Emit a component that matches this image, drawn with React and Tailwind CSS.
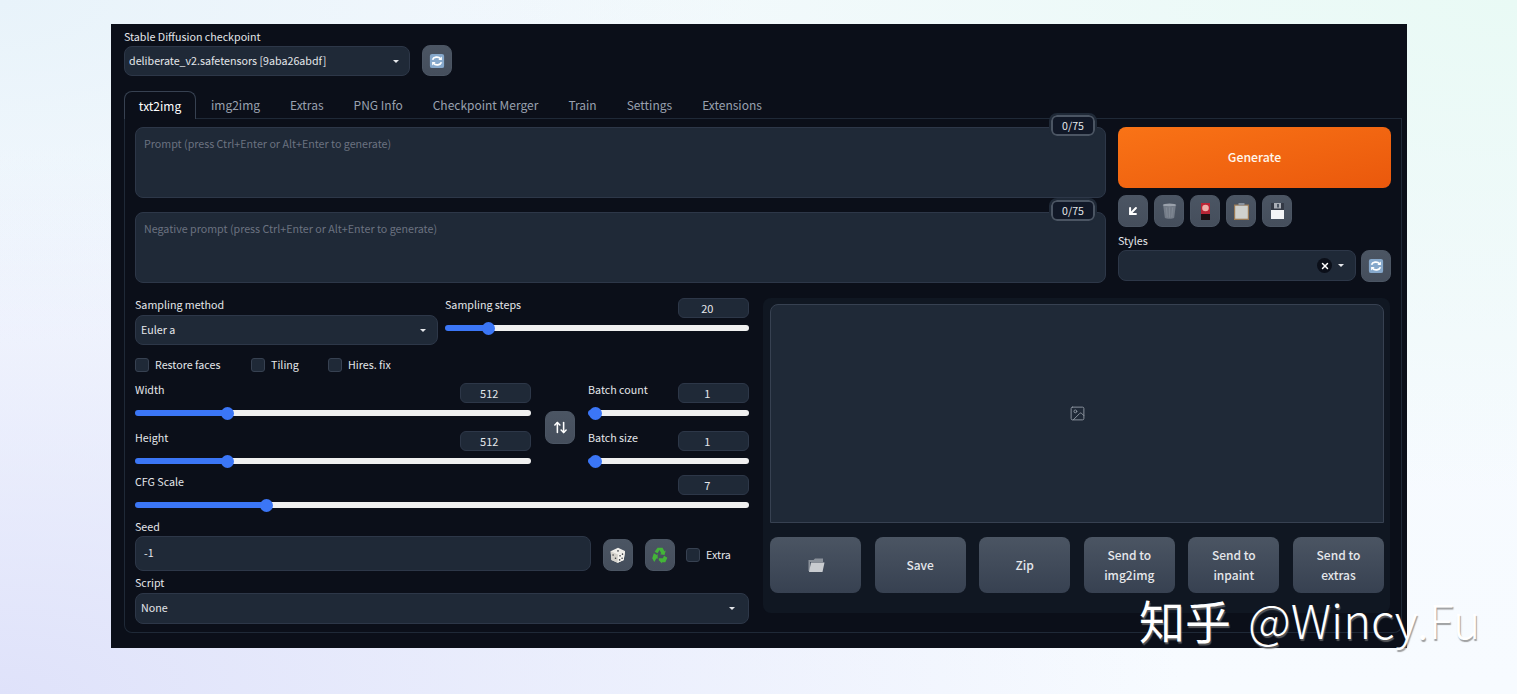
import React from "react";
import { ArrowDownLeft, ArrowUpDown, Image as ImageIcon, X } from "lucide-react";

const Caret = () => (
  <span className="w-0 h-0 border-x-[3px] border-x-transparent border-t-[3px] border-t-gray-200" />
);

const Label = ({ children, className = "" }) => (
  <div className={`text-[10.7px] leading-[16px] text-gray-200 ${className}`}>{children}</div>
);

const RefreshGlyph = () => (
  <svg width="16" height="16" viewBox="0 0 18 18">
    <rect x="1" y="1" width="16" height="16" rx="2.500" fill="#86a8cb" />
    <path d="M4 7.500C5 4.500 10.500 3.500 13 6.500" fill="none" stroke="#fff" strokeWidth="2" />
    <path d="M14.500 4v4h-4z" fill="#fff" />
    <path d="M14 10.500C13 13.500 7.500 14.500 5 11.500" fill="none" stroke="#fff" strokeWidth="2" />
    <path d="M3.500 14v-4h4z" fill="#fff" />
  </svg>
);

const TrashGlyph = () => (
  <svg width="17" height="18" viewBox="0 0 18 20">
    <ellipse cx="9" cy="3.500" rx="7.500" ry="1.800" fill="#9aa1ab" />
    <path d="M2 4l1.800 13.500c1.500 1.500 9 1.500 10.400 0L16 4c-3 1.500-11 1.500-14 0z" fill="#747c88" />
    <path d="M5.500 6l1 11M9 6v11.500M12.500 6l-1 11" stroke="#868e99" strokeWidth="0.800" />
  </svg>
);

const RedGlyph = () => (
  <svg width="9" height="17" viewBox="0 0 9 17">
    <rect x="0" y="0" width="9" height="11" fill="#b92535" />
    <rect x="0" y="11" width="9" height="6" fill="#1c1013" />
    <circle cx="4.500" cy="5" r="3.300" fill="#eeb0a9" />
  </svg>
);

const ClipboardGlyph = () => (
  <svg width="15" height="17" viewBox="0 0 15 17">
    <rect x="0" y="1.500" width="15" height="15.500" fill="#9a7a56" />
    <rect x="1.200" y="2.700" width="12.600" height="13" fill="#cfd0cd" />
    <rect x="4.500" y="0" width="6" height="2.500" fill="#8b929c" />
  </svg>
);

const SaveGlyph = () => (
  <svg width="13" height="16" viewBox="0 0 13 16">
    <rect x="0" y="0" width="13" height="7" fill="#333945" />
    <rect x="3" y="0" width="7" height="5.500" fill="#a9aeb6" />
    <rect x="6" y="1" width="2" height="3.500" fill="#4b5563" />
    <rect x="0" y="7" width="13" height="9" fill="#f3f4f6" />
  </svg>
);

const DiceGlyph = () => (
  <svg width="18" height="18" viewBox="0 0 22 22">
    <path d="M11 2l8.500 4-1.500 11-7.500 3.500L3 17 2 6.500z" fill="#f0eeea" />
    <path d="M2 6.500L11 10.500l8.500-4.500-1.500 11-7.500 3.500L3 17z" fill="#d4d1cb" />
    <path d="M11 10.500l8.500-4.500-1.500 11-7.500 3.500z" fill="#f5f3ef" />
    <g fill="#3a3d42">
      <circle cx="11" cy="6" r="1" />
      <circle cx="5" cy="11" r="1" />
      <circle cx="8" cy="15" r="1" />
      <circle cx="13.500" cy="12" r="1" />
      <circle cx="16.500" cy="10" r="1" />
      <circle cx="13" cy="17" r="1" />
      <circle cx="16" cy="15" r="1" />
    </g>
  </svg>
);

const RecycleGlyph = () => (
  <svg width="18" height="18" viewBox="0 0 22 22">
    <g fill="#43b538">
      <path d="M8 2h6l2.500 4.500 1.500-1-1.500 5.500-5.500-1 1.500-1L10.500 5 8 9 4.500 7z" />
      <path d="M3.500 9l3.500 2 1-1.200.3 5.500H6.500L4 19.500 1.500 15z" />
      <path d="M9.500 15h5l1.500-3 4 2.500-2.500 5.500h-4v1.500L9.500 17.500z" />
    </g>
  </svg>
);

const FolderGlyph = () => (
  <svg width="18" height="16" viewBox="0 0 18 16">
    <path d="M1.500 3h5l1.500-1.500h8V5H3v9H1.500z" fill="#8b929b" />
    <path d="M4 5.500h13.500L15.500 15H2z" fill="#c9ccd0" />
  </svg>
);

const IconButton = ({ children, className = "" }) => (
  <button className={`flex items-center justify-center w-[30px] rounded-lg bg-gradient-to-b from-[#4b5563] to-[#454e5c] border border-[#4b5563] ${className}`}>
    {children}
  </button>
);

const NumberBox = ({ value, className = "" }) => (
  <div className={`w-[71.5px] h-[20px] rounded-md bg-[#1f2937] border border-[#2d3748] flex items-center justify-center pr-[12px] text-[11px] text-gray-200 ${className}`}>
    {value}
  </div>
);

const Slider = ({ pct }) => (
  <div className="flex items-center h-[12px] mt-[1px]">
    <div className="h-[6px] rounded-l-full bg-[#3b76f6]" style={{ width: `${pct}%` }} />
    <div className="w-[13px] h-[13px] -mx-[6px] rounded-full bg-[#3b76f6] relative z-10 shrink-0" />
    <div className="h-[6px] flex-1 rounded-r-full bg-[#f0f0f0]" />
  </div>
);

const Checkbox = ({ label, className = "" }) => (
  <label className={`flex items-center gap-[6px] text-[10.7px] text-gray-200 ${className}`}>
    <span className="w-[14px] h-[14px] rounded-[3px] bg-[#1f2937] border border-[#374151]" />
    {label}
  </label>
);

const SliderField = ({ label, value, pct, className = "" }) => (
  <div className={className}>
    <div className="flex items-start justify-between h-[23px]">
      <Label className="-mt-[1px]">{label}</Label>
      <NumberBox value={value} />
    </div>
    <Slider pct={pct} />
  </div>
);

const TokenCounter = ({ className = "" }) => (
  <div className={`absolute w-[44px] h-[21px] rounded-md border-2 border-[#4b5563] outline-2 outline-[#1f2937] bg-[#111827] flex items-center justify-center text-[10.6px] text-gray-200 ${className}`}>
    0/75
  </div>
);

const tabs = ["img2img", "Extras", "PNG Info", "Checkpoint Merger", "Train", "Settings", "Extensions"];

const sendButtons = [
  ["Save"],
  ["Zip"],
  ["Send to", "img2img"],
  ["Send to", "inpaint"],
  ["Send to", "extras"],
];

export default function App() {
  return (
    <div className="w-[1517px] h-[694px] overflow-hidden relative pt-6 pl-[111px] font-['Noto_Sans_CJK_SC',sans-serif] bg-[radial-gradient(ellipse_at_0%_100%,#dfe2fa_0%,transparent_55%),radial-gradient(ellipse_at_100%_0%,#e9faf5_0%,transparent_50%),radial-gradient(ellipse_at_0%_0%,#e8f3fa_0%,transparent_35%),linear-gradient(#f5f9fe,#f7fbff)]">
      <div className="relative w-[1296px] h-[624px] bg-[#0b0f19] pl-[13px] pt-[5px]">
        {/* checkpoint */}
        <Label>Stable Diffusion checkpoint</Label>
        <div className="flex gap-3 h-[31px]">
          <div className="w-[286px] h-[30px] mt-[1px] rounded-lg bg-[#1f2937] border border-[#2d3748] flex items-center justify-between pl-[4px] pr-[10px] text-[10.7px] text-gray-200">
            deliberate_v2.safetensors [9aba26abdf]
            <Caret />
          </div>
          <IconButton className="h-[31px]"><RefreshGlyph /></IconButton>
        </div>

        {/* tabs */}
        <div className="flex mt-[15px] h-[28px] w-[1278px] border-b border-[#1f2937]">
          <div className="w-[72px] h-[28px] rounded-t-lg border border-b-0 border-[#374151] bg-[#0b0f19] flex items-center justify-center text-[12px] text-white">
            txt2img
          </div>
          {tabs.map((t) => (
            <div key={t} className="px-[15px] flex items-center text-[12px] text-gray-400">{t}</div>
          ))}
        </div>

        <div className="w-[1278px] h-[514px] border border-t-0 border-[#1f2937] rounded-b-lg pl-[10px] pt-[8px]">
          {/* prompts + generate */}
          <div className="flex gap-3 h-[156px]">
            <div className="w-[971px] flex flex-col gap-[14px] relative">
              <div className="h-[71px] rounded-lg bg-[#1f2937] border border-[#2d3748] px-[8px] py-[8px] text-[10.7px] leading-[16px] text-[#6b7280]">
                Prompt (press Ctrl+Enter or Alt+Enter to generate)
              </div>
              <div className="h-[71px] rounded-lg bg-[#1f2937] border border-[#2d3748] px-[8px] py-[8px] text-[10.7px] leading-[16px] text-[#6b7280]">
                Negative prompt (press Ctrl+Enter or Alt+Enter to generate)
              </div>
              <TokenCounter className="right-[11px] -top-[12px]" />
              <TokenCounter className="right-[11px] top-[73px]" />
            </div>
            <div className="w-[273px]">
              <button className="w-full h-[61px] rounded-lg bg-gradient-to-br from-[#f97316] to-[#ea580c] text-[12.3px] font-medium text-orange-50">
                Generate
              </button>
              <div className="flex gap-[6px] mt-[7px] h-[32px]">
                <IconButton><ArrowDownLeft size={14} strokeWidth={3.5} color="#fff" /></IconButton>
                <IconButton><TrashGlyph /></IconButton>
                <IconButton><RedGlyph /></IconButton>
                <IconButton><ClipboardGlyph /></IconButton>
                <IconButton><SaveGlyph /></IconButton>
              </div>
              <Label className="mt-[6px]">Styles</Label>
              <div className="flex gap-[5px] h-[31px] mt-[1px]">
                <div className="w-[238px] rounded-lg bg-[#1f2937] border border-[#2d3748] flex items-center justify-end gap-[6px] pr-[11px]">
                  <span className="w-[15px] h-[15px] rounded-full bg-[#0b0f19] flex items-center justify-center">
                    <X size={10} strokeWidth={3.5} color="#fff" />
                  </span>
                  <Caret />
                </div>
                <IconButton className="h-[32px]"><RefreshGlyph /></IconButton>
              </div>
            </div>
          </div>

          {/* settings + output */}
          <div className="flex gap-[14px] mt-[15px]">
            <div className="w-[614px]">
              <div className="flex gap-[7px]">
                <div className="w-[303px]">
                  <Label className="-mt-[1px] mb-[2px]">Sampling method</Label>
                  <div className="h-[30px] rounded-lg bg-[#1f2937] border border-[#2d3748] flex items-center justify-between pl-[5px] pr-[11px] text-[10.7px] text-gray-200">
                    Euler a
                    <Caret />
                  </div>
                </div>
                <SliderField className="w-[304px]" label="Sampling steps" value="20" pct={14.3} />
              </div>

              <div className="flex h-[14px] mt-[13px] items-center">
                <Checkbox label="Restore faces" className="w-[116px]" />
                <Checkbox label="Tiling" className="w-[77px]" />
                <Checkbox label="Hires. fix" />
              </div>

              <div className="flex mt-[11px]">
                <div className="w-[396px] flex flex-col gap-[12px]">
                  <SliderField label="Width" value="512" pct={23.3} />
                  <SliderField label="Height" value="512" pct={23.3} />
                </div>
                <IconButton className="h-[33px] mt-[28px] ml-[14px] mr-[13px]"><ArrowUpDown size={15} strokeWidth={2.5} color="#fff" /></IconButton>
                <div className="w-[161px] flex flex-col gap-[12px]">
                  <SliderField label="Batch count" value="1" pct={4.5} />
                  <SliderField label="Batch size" value="1" pct={4.5} />
                </div>
              </div>

              <SliderField className="mt-[8px]" label="CFG Scale" value="7" pct={21.3} />

              <Label className="mt-[8px]">Seed</Label>
              <div className="flex items-center h-[35px] mt-[1px]">
                <div className="w-[456px] h-[35px] rounded-lg bg-[#1f2937] border border-[#2d3748] flex items-center px-[8px] text-[10.7px] text-gray-200">
                  -1
                </div>
                <IconButton className="h-[32px] ml-[12px] mt-[3px]"><DiceGlyph /></IconButton>
                <IconButton className="h-[32px] ml-[12px] mt-[3px]"><RecycleGlyph /></IconButton>
                <Checkbox label="Extra" className="ml-[11px] mt-[4px]" />
              </div>

              <Label className="mt-[4px]">Script</Label>
              <div className="h-[31px] mt-[2px] rounded-lg bg-[#1f2937] border border-[#2d3748] flex items-center justify-between pl-[5px] pr-[13px] text-[10.7px] text-gray-200">
                None
                <Caret />
              </div>
            </div>

            {/* output gallery */}
            <div className="w-[627px] h-[315px] rounded-lg bg-[#101722] pl-[7px] pr-[6px] pt-[6px]">
              <div className="h-[219px] rounded-t-lg bg-[#1f2937] border border-[#374151] flex items-center justify-center">
                <ImageIcon size={17} color="#8a929d" strokeWidth={1.4} />
              </div>
              <div className="grid grid-cols-6 gap-[13.5px] mt-[14px]">
                <button className="h-[56px] rounded-lg bg-gradient-to-b from-[#4b5563] to-[#374151] flex items-center justify-center">
                  <FolderGlyph />
                </button>
                {sendButtons.map((lines) => (
                  <button key={lines[0] + lines[1]} className="h-[56px] rounded-lg bg-gradient-to-b from-[#4b5563] to-[#374151] text-[12px] leading-[20px] font-medium text-gray-200">
                    {lines.map((l) => <div key={l}>{l}</div>)}
                  </button>
                ))}
              </div>
            </div>
          </div>
        </div>
      </div>

      {/* watermark */}
      <div className="absolute left-[1139px] top-[588px] flex items-baseline text-white whitespace-nowrap leading-[62px] [text-shadow:1px_2px_1px_rgba(120,120,120,0.7)]">
        <span className="text-[46px]">知乎</span>
        <span className="text-[47px] font-light ml-[17px]">@Wincy.Fu</span>
      </div>
    </div>
  );
}
